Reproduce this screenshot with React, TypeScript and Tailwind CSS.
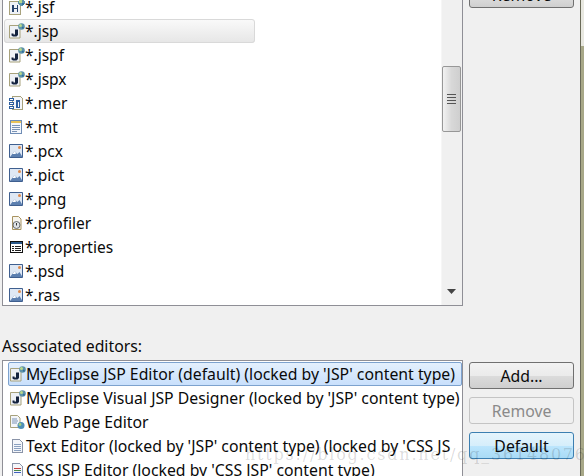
import React from "react";

const Globe = () => (
  <>
    <circle cx="12.500" cy="3.500" r="3.300" fill="#5f93a8" />
    <circle cx="11.500" cy="2.500" r="1.500" fill="#b8d88a" />
    <circle cx="13.800" cy="4.800" r="1" fill="#2f6f9f" />
  </>
);
const J = () => (
  <svg width="16" height="16" viewBox="0 0 16 16" className="shrink-0">
    <path d="M.5 2.500h10.500v12.500H.5z" fill="#eef1f6" stroke="#a8a27c" />
    <path d="M6 6.500h3v5.500l-1.500 1.500H4l-1.500-1v-2h2v1h1.500z" fill="#14233f" />
    <Globe />
  </svg>
);
const H = () => (
  <svg width="16" height="16" viewBox="0 0 16 16" className="shrink-0" shapeRendering="crispEdges">
    <path d="M.5 2.500h10.500v12.500H.5z" fill="#eef1f6" stroke="#a8a27c" />
    <path d="M3 6h1.500v3h3V6H9v7H7.500v-3h-3v3H3z" fill="#24406a" />
    <Globe />
  </svg>
);
const Img = () => (
  <svg width="16" height="16" viewBox="0 0 16 16" className="shrink-0">
    <path d="M.5 1.500h13v13H.5z" fill="#dfe8f4" stroke="#3f5f8f" />
    <path d="M1 14l4.500-6 3 3 2-2 3 5z" fill="#5d80b0" />
    <path d="M3.500 11l2-3 2 2.500-2 .5z" fill="#fff" />
    <circle cx="10.500" cy="4.500" r="1.500" fill="#e08a4a" />
  </svg>
);
const Mer = () => (
  <svg width="16" height="16" viewBox="0 0 16 16" className="shrink-0" shapeRendering="crispEdges">
    <path d="M3.500 1.500h8l2 2v11h-10z" fill="#f4f6fa" stroke="#a8a27c" />
    <path d="M7 5h4v8H7zM8.500 6.500v5h1v-5z" fill="#2d5f9f" fillRule="evenodd" />
    <path d="M.5 3.500h4v2h-4zM.5 7.500h4v2h-4zM.5 11.500h4v2h-4z" fill="#fff" stroke="#2d5f9f" />
  </svg>
);
const Mt = () => (
  <svg width="16" height="16" viewBox="0 0 16 16" className="shrink-0" shapeRendering="crispEdges">
    <path d="M1.500 1.500h11v13h-11z" fill="#f4f7fc" stroke="#6f8db5" />
    <path d="M2 2h10v2H2z" fill="#e8c35a" />
    <path d="M3 6h8M3 8h8M3 10h8M3 12h5" stroke="#7a93b5" />
  </svg>
);
const Prof = () => (
  <svg width="16" height="16" viewBox="0 0 16 16" className="shrink-0">
    <path d="M3.500 1.500h6l2.500 2.500v10.500h-8.500z" fill="#f7f5ee" stroke="#a89360" />
    <circle cx="7.500" cy="10" r="3.500" fill="#dfe3e6" stroke="#666a70" />
    <path d="M7.500 8v2.500" stroke="#333" />
  </svg>
);
const Props = () => (
  <svg width="16" height="16" viewBox="0 0 16 16" className="shrink-0" shapeRendering="crispEdges">
    <path d="M1.500 2.500h12v11h-12z" fill="#fff" stroke="#111" />
    <path d="M2 3h11v2H2z" fill="#2b5a8c" />
    <path d="M3 7h2M6 7h6M3 9h2M6 9h6M3 11h2M6 11h6" stroke="#222" />
  </svg>
);
const Web = () => (
  <svg width="16" height="16" viewBox="0 0 16 16" className="shrink-0">
    <path d="M.5 1.500h7l2.500 2.500v9.500H.5z" fill="#f4f6fa" stroke="#a8a27c" />
    <path d="M2 5h5M2 7h6M2 9h5" stroke="#7a93b5" />
    <circle cx="11" cy="11.500" r="3.500" fill="#4f8fb8" />
    <circle cx="10" cy="10.500" r="1.400" fill="#a6d07e" />
  </svg>
);
const Txt = () => (
  <svg width="16" height="16" viewBox="0 0 16 16" className="shrink-0" shapeRendering="crispEdges">
    <path d="M2.500 1.500h7l3 3v10h-10z" fill="#f4f6fa" stroke="#8a94a8" />
    <path d="M4 6h7M4 8h7M4 10h7M4 12h7" stroke="#8aa0c0" />
  </svg>
);
const Css = () => (
  <svg width="16" height="16" viewBox="0 0 16 16" className="shrink-0" shapeRendering="crispEdges">
    <path d="M2.500 1.500h7l3 3v10h-10z" fill="#f4f6fa" stroke="#8a94a8" />
    <path d="M4 6h7" stroke="#c04040" />
    <path d="M4 8h7" stroke="#4a8a4a" />
    <path d="M4 10h7" stroke="#4060c0" />
  </svg>
);

const files: [React.ReactNode, string, boolean?][] = [
  [<H />, "*.jsf"],
  [<J />, "*.jsp", true],
  [<J />, "*.jspf"],
  [<J />, "*.jspx"],
  [<Mer />, "*.mer"],
  [<Mt />, "*.mt"],
  [<Img />, "*.pcx"],
  [<Img />, "*.pict"],
  [<Img />, "*.png"],
  [<Prof />, "*.profiler"],
  [<Props />, "*.properties"],
  [<Img />, "*.psd"],
  [<Img />, "*.ras"],
];
const editors: [React.ReactNode, string, boolean?][] = [
  [<J />, "MyEclipse JSP Editor (default) (locked by 'JSP' content type)", true],
  [<J />, "MyEclipse Visual JSP Designer (locked by 'JSP' content type)"],
  [<Web />, "Web Page Editor"],
  [<Txt />, "Text Editor (locked by 'JSP' content type) (locked by 'CSS JS"],
  [<Css />, "CSS JSP Editor (locked by 'CSS JSP' content type)"],
];

export default function App() {
  return (
    <div className="relative w-[584px] h-[476px] overflow-hidden bg-[#f0f0f0] flex text-[15.8px] leading-6 text-[#0a0a0a] font-['Noto_Sans',sans-serif]">
      <div className="w-[580px] shrink-0 flex flex-col">
        <div className="flex h-[306px] shrink-0 items-end">
          <div className="ml-[2px] w-[461px] h-[325px] shrink-0 border border-[#8f8f96] bg-white flex">
            <div className="flex-1 pt-[13px] pl-[1px] pr-[1px] overflow-hidden text-[15.5px]">
              {files.map(([icon, label, hover]) => (
                <div
                  key={label}
                  className={`h-6 flex items-center pl-[5px] gap-0 rounded-[3px] w-[251px] ${hover ? "bg-gradient-to-b from-[#fafafa] to-[#e6e6e6] outline outline-1 -outline-offset-1 outline-[#d9d9d9]" : ""}`}
                >
                  {icon}
                  <span>{label}</span>
                </div>
              ))}
            </div>
            <div className="w-[21px] shrink-0 bg-[#f0f0f0] border-l border-[#f6f6f6] flex flex-col">
              <div className="h-[84px] shrink-0" />
              <div className="w-[19px] h-[66px] shrink-0 rounded-[2px] border border-[#979797] bg-gradient-to-r from-[#f2f2f2] via-[#d8d8d8] to-[#cfcfcf] flex flex-col items-center justify-center gap-[2px]">
                <div className="w-[9px] h-px bg-[#555]" />
                <div className="w-[9px] h-px bg-[#555]" />
                <div className="w-[9px] h-px bg-[#555]" />
                <div className="w-[9px] h-px bg-[#555]" />
              </div>
              <div className="flex-1" />
              <div className="h-[16px] flex items-start justify-center pr-[2px]">
                <svg width="9" height="5" viewBox="0 0 9 5"><path d="M0 0h9L4.500 5z" fill="#444" /></svg>
              </div>
            </div>
          </div>
          <div className="ml-[6px] w-[105px] self-start -mt-[19px] h-[27px] rounded-[3px] border border-[#707070] bg-gradient-to-b from-[#f2f2f2] to-[#cfcfcf] flex items-center justify-center">Remove</div>
        </div>
        <div className="h-[54px] shrink-0 pl-[2px] pt-[28px] leading-[24px]">Associated editors:</div>
        <div className="flex flex-1 min-h-0">
          <div className="ml-[2px] w-[461px] h-[200px] shrink-0 border border-[#8f8f96] bg-white pt-[1px] pl-[5px]">
            {editors.map(([icon, label, sel]) => (
              <div
                key={label}
                className={`h-6 flex items-center gap-0 whitespace-nowrap overflow-hidden w-[454px] ${sel ? "pl-[1px] rounded-[2px] border border-[#7da2ce] bg-gradient-to-b from-[#e4f0fd] to-[#c9e0fc]" : "pl-[2px]"}`}
              >
                {icon}
                <span>{label}</span>
              </div>
            ))}
          </div>
          <div className="ml-[6px] w-[105px] flex flex-col gap-[8px] pt-[2px]">
            <div className="h-[27px] rounded-[3px] border border-[#707070] bg-[linear-gradient(to_bottom,#f2f2f2_0%,#ebebeb_50%,#dcdcdc_50%,#cfcfcf_100%)] flex items-center justify-center">Add...</div>
            <div className="h-[27px] rounded-[3px] border border-[#c4c4c4] bg-[#f0f0f0] text-[#8a8a8a] flex items-center justify-center">Remove</div>
            <div className="h-[27px] rounded-[3px] border border-[#3c7fb1] bg-[linear-gradient(to_bottom,#e5f4fc_0%,#d6eefb_50%,#bde6fd_50%,#a9dbf6_100%)] flex items-center justify-center">Default</div>
          </div>
        </div>
      </div>
      <div className="flex-1 flex flex-col border-l border-[#6a6a58]">
        <div className="h-[46px] bg-[#e8e8e0]" />
        <div className="flex-1 bg-[#a8a888]" />
      </div>
      <div className="absolute left-[245px] top-[443px] text-[16px] leading-6 tracking-[1.8px] text-[#00000026] font-['DejaVu_Serif',serif] whitespace-nowrap pointer-events-none">https://blog.csdn.net/qq_36148076</div>
    </div>
  );
}
